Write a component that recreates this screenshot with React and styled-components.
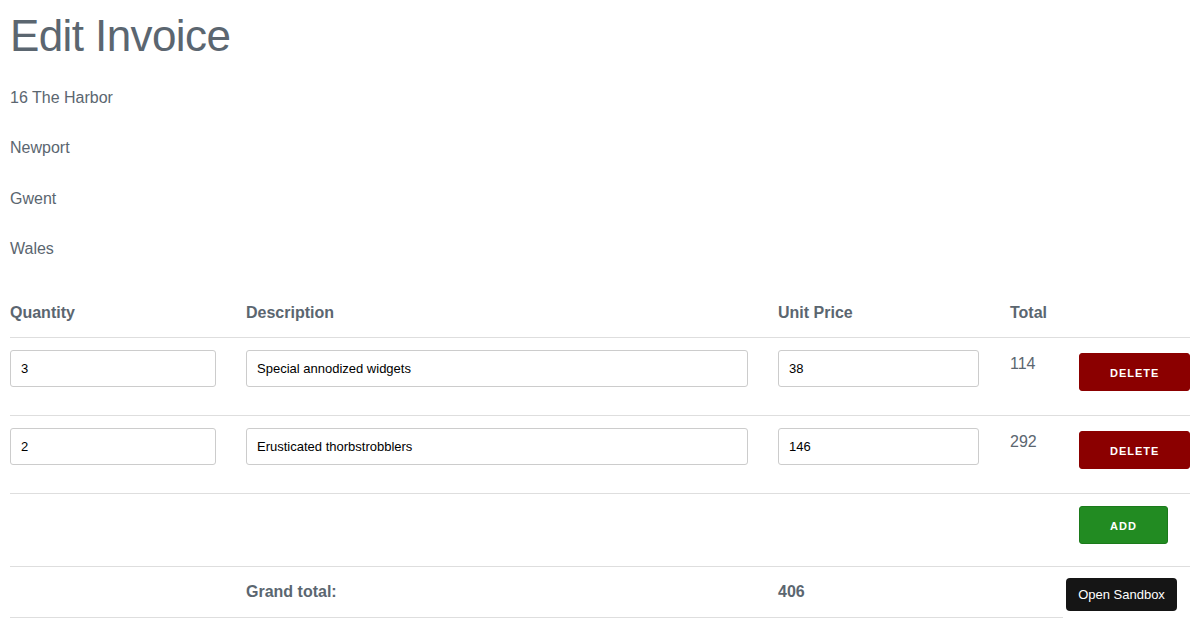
import React from "react";
import styled, { createGlobalStyle } from "styled-components";

const Global = createGlobalStyle`
  html, body { margin: 0; padding: 0; background: #fff; }
  body { font-family: "Liberation Sans", Arial, sans-serif; color: #5b6670; }
`;

const Page = styled.div`
  padding: 10px 10px 0 10px;
`;

const Title = styled.h1`
  margin: 0;
  font-size: 44px;
  line-height: 52px;
  font-weight: 400;
  letter-spacing: -0.6px;
  color: #5b6670;
`;

const Address = styled.div`
  margin-top: 23.5px;
  display: flex;
  flex-direction: column;
  gap: 26.5px;
`;

const Line = styled.p`
  margin: 0;
  font-size: 16px;
  line-height: 24px;
`;

const Table = styled.div`
  margin-top: 28px;
  width: 1180px;
`;

const Row = styled.div`
  display: grid;
  grid-template-columns: 236px 532px 232px 69px 111px;
  align-items: start;
  border-top: ${(p) => (p.$first ? "none" : "1px solid #dedede")};
  border-bottom: ${(p) => (p.$last ? "1px solid #dedede" : "none")};
  padding: ${(p) => p.$pad || "12px 0"};
`;

const Head = styled.div`
  font-size: 16px;
  line-height: 24px;
  font-weight: 700;
`;

const Cell = styled.div`
  font-size: 16px;
  line-height: 24px;
  padding-top: ${(p) => p.$offset || 0}px;
  font-weight: ${(p) => (p.$bold ? 700 : 400)};
`;

const Input = styled.input`
  box-sizing: border-box;
  display: block;
  width: ${(p) => p.$w}px;
  height: 37px;
  margin: 0 0 16px 0;
  padding: 0 10px;
  border: 1px solid #cccccc;
  border-radius: 3px;
  font-family: "Liberation Sans", Arial, sans-serif;
  font-size: 13px;
  color: #000;
  background: #fff;
  outline: none;
`;

const Button = styled.button`
  box-sizing: border-box;
  height: 38px;
  margin: ${(p) => p.$margin || "0"};
  padding: 2px 30px 0 30px;
  border: 1px solid ${(p) => p.$border};
  border-radius: 3px;
  background: ${(p) => p.$bg};
  color: #fff;
  font-family: "Liberation Sans", Arial, sans-serif;
  font-size: 11px;
  font-weight: 700;
  letter-spacing: 1px;
  cursor: pointer;
  white-space: nowrap;
`;

const SandboxWrap = styled.div`
  position: fixed;
  right: 0;
  bottom: 0;
  background: #fff;
  padding: 3px 23px 19px 3px;
`;

const SandboxButton = styled.div`
  height: 33px;
  width: 111px;
  box-sizing: border-box;
  display: flex;
  align-items: center;
  justify-content: center;
  white-space: nowrap;
  background: #151515;
  color: #fff;
  border-radius: 4px;
  font-family: "Liberation Sans", Arial, sans-serif;
  font-size: 13px;
`;

const items = [
  { qty: "3", desc: "Special annodized widgets", price: "38", total: "114" },
  { qty: "2", desc: "Erusticated thorbstrobblers", price: "146", total: "292" },
];

export default function App() {
  return (
    <>
      <Global />
      <Page>
        <Title>Edit Invoice</Title>
        <Address>
          <Line>16 The Harbor</Line>
          <Line>Newport</Line>
          <Line>Gwent</Line>
          <Line>Wales</Line>
        </Address>
        <Table>
          <Row $first $pad="12px 0 12px 0">
            <Head>Quantity</Head>
            <Head>Description</Head>
            <Head>Unit Price</Head>
            <Head>Total</Head>
            <Head />
          </Row>
          {items.map((it) => (
            <Row key={it.desc}>
              <div>
                <Input $w={206} defaultValue={it.qty} />
              </div>
              <div>
                <Input $w={502} defaultValue={it.desc} />
              </div>
              <div>
                <Input $w={201} defaultValue={it.price} />
              </div>
              <Cell $offset={2}>{it.total}</Cell>
              <div>
                <Button $bg="#8b0000" $border="#8b0000" $margin="3px 0 0 0">
                  DELETE
                </Button>
              </div>
            </Row>
          ))}
          <Row $pad="12px 0 22px 0">
            <div />
            <div />
            <div />
            <div />
            <div>
              <Button $bg="#228b22" $border="#1b7a1b">ADD</Button>
            </div>
          </Row>
          <Row $last $pad="13px 0 13px 0">
            <Cell />
            <Cell $bold>Grand total:</Cell>
            <Cell $bold>406</Cell>
            <Cell />
            <Cell />
          </Row>
        </Table>
      </Page>
      <SandboxWrap>
        <SandboxButton>Open Sandbox</SandboxButton>
      </SandboxWrap>
    </>
  );
}
